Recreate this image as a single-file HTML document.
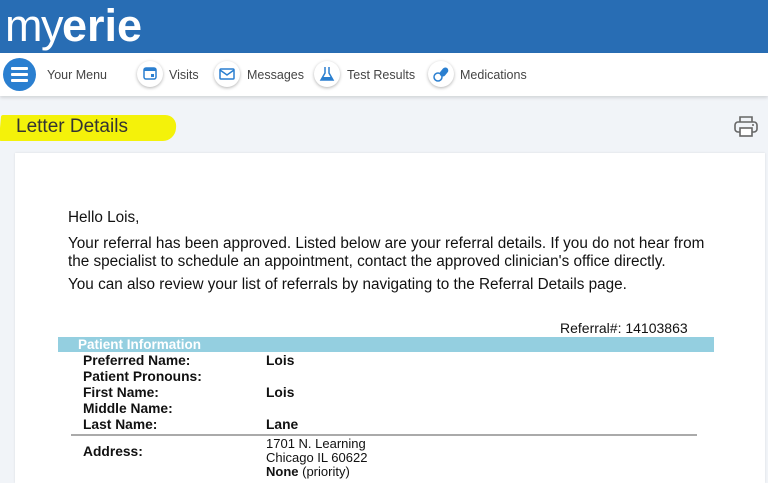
<!DOCTYPE html>
<html><head><style>
*{margin:0;padding:0;box-sizing:border-box}
body{width:768px;height:474px;overflow:hidden;background:#f1f4f8;font-family:"Liberation Sans",sans-serif;position:relative}
.hdr{position:absolute;left:0;top:0;width:768px;height:53px;background:#286db4}
.logo{position:absolute;left:5px;top:0px;color:#fff;font-size:45px;letter-spacing:-1.5px}
.logo b{font-weight:900;letter-spacing:0}
.nav{position:absolute;left:0;top:53px;width:768px;height:43px;background:#fff;box-shadow:0 2px 3px rgba(0,0,0,.12)}
.nav span{position:absolute;top:15px;font-size:12.5px;color:#444}
.ic{position:absolute;top:8px;width:26px;height:26px;border-radius:50%;background:#fff;box-shadow:0 1px 3px rgba(0,0,0,.3)}
.menu{position:absolute;left:3px;top:58px;width:33px;height:33px;border-radius:50%;background:#2a7fd0}
.menu i{position:absolute;left:8px;width:17px;height:3px;background:#fff;border-radius:1px}
.hl{position:absolute;left:0;top:115px;width:176px;height:26px;background:#f4f20a;border-radius:2px 12px 12px 2px;transform:skewX(-5deg)}
h1{position:absolute;left:16px;top:116px;font-weight:normal;font-size:19px;color:#333}
.card{position:absolute;left:15px;top:153px;width:750px;height:330px;background:#fff;box-shadow:0 0 2px rgba(0,0,0,.1)}
.t{position:absolute;font-size:15.3px;color:#111;white-space:nowrap}
.bar{position:absolute;left:58px;top:337px;width:656px;height:15px;background:#94cfe0;color:#fff;font-weight:bold;font-size:13.5px;padding-left:20px;line-height:15px}
.l{position:absolute;left:83px;font-size:13.8px;font-weight:bold;color:#111}
.v{position:absolute;left:266px;font-size:13.8px;color:#111}
</style></head><body>
<div class="hdr"><div class="logo">my<b>erie</b></div></div>
<div class="nav">
<span style="left:47px">Your Menu</span>
<div class="ic" style="left:137px"><svg width="26" height="26"><rect x="7" y="7" width="12" height="11" rx="2" fill="none" stroke="#2a7fd0" stroke-width="1.5"/><rect x="7" y="7" width="12" height="3" fill="#2a7fd0"/><rect x="14" y="13" width="3" height="3" fill="#2a7fd0"/></svg></div>
<span style="left:169px">Visits</span>
<div class="ic" style="left:214px"><svg width="26" height="26"><rect x="6" y="8" width="14" height="10" rx="1" fill="none" stroke="#2a7fd0" stroke-width="1.5"/><path d="M6 9l7 5 7-5" fill="none" stroke="#2a7fd0" stroke-width="1.5"/></svg></div>
<span style="left:247px">Messages</span>
<div class="ic" style="left:314px"><svg width="26" height="26"><path d="M11 6v6l-4 7h12l-4-7V6" fill="none" stroke="#2a7fd0" stroke-width="1.5"/><path d="M9 16h8l1 3H8z" fill="#2a7fd0"/></svg></div>
<span style="left:347px">Test Results</span>
<div class="ic" style="left:428px"><svg width="26" height="26"><circle cx="10" cy="16" r="4" fill="none" stroke="#2a7fd0" stroke-width="1.5"/><rect x="13" y="6" width="6" height="10" rx="3" transform="rotate(40 16 11)" fill="#2a7fd0"/></svg></div>
<span style="left:460px">Medications</span>
</div>
<div class="menu"><i style="top:9px"></i><i style="top:15px"></i><i style="top:21px"></i></div>
<div class="hl"></div>
<h1>Letter Details</h1>
<svg style="position:absolute;left:733px;top:114px" width="26" height="24"><path d="M7 8V3h12v5" fill="none" stroke="#666" stroke-width="1.6"/><rect x="2" y="8" width="22" height="10" rx="3" fill="none" stroke="#666" stroke-width="1.6"/><rect x="7" y="14" width="12" height="8" fill="#fff" stroke="#666" stroke-width="1.6"/><circle cx="20" cy="11" r="1" fill="#666"/></svg>
<div class="card"></div>
<div class="t" style="left:68px;top:209px">Hello Lois,</div>
<div class="t" style="left:68px;top:235px;line-height:18px">Your referral has been approved. Listed below are your referral details. If you do not hear from<br>the specialist to schedule an appointment, contact the approved clinician's office directly.</div>
<div class="t" style="left:68px;top:276px">You can also review your list of referrals by navigating to the Referral Details page.</div>
<div class="t" style="left:560px;top:320px;font-size:14px">Referral#: 14103863</div>
<div class="bar">Patient Information</div>
<div class="l" style="top:353px">Preferred Name:</div><div class="v" style="top:353px;font-weight:bold">Lois</div>
<div class="l" style="top:369px">Patient Pronouns:</div>
<div class="l" style="top:385px">First Name:</div><div class="v" style="top:385px;font-weight:bold">Lois</div>
<div class="l" style="top:401px">Middle Name:</div>
<div class="l" style="top:417px">Last Name:</div><div class="v" style="top:417px;font-weight:bold">Lane</div>
<div style="position:absolute;left:71px;top:434px;width:626px;height:2px;background:#aaa"></div>
<div class="l" style="top:444px">Address:</div>
<div class="v" style="top:436px;font-size:13px">1701 N. Learning</div>
<div class="v" style="top:450px;font-size:13px">Chicago IL 60622</div>
<div class="v" style="top:464px;font-size:13px"><b>None</b> (priority)</div>
</body></html>
